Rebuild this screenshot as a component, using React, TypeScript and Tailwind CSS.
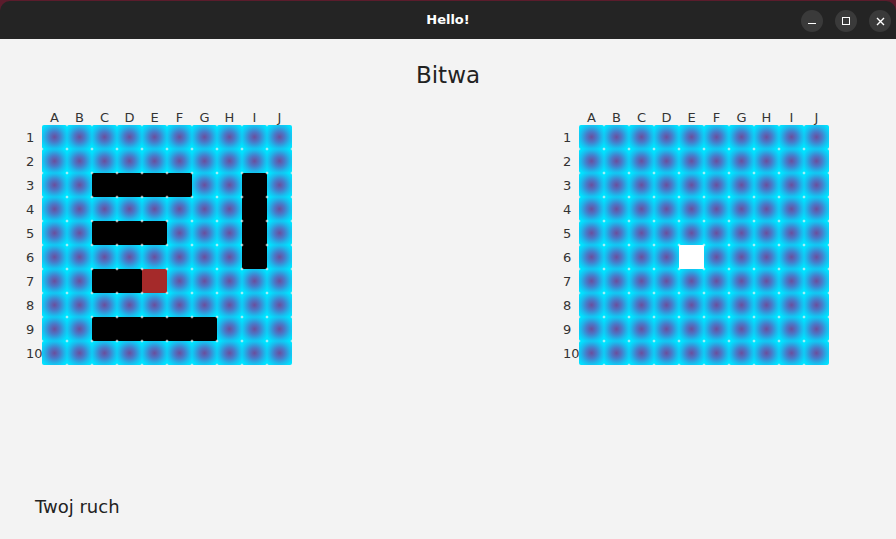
import React from "react";

const COLS = ["A", "B", "C", "D", "E", "F", "G", "H", "I", "J"];
const ROWS = [1, 2, 3, 4, 5, 6, 7, 8, 9, 10];

type Cell = "water" | "ship" | "hit" | "miss";

// ships on the player's board
const SHIPS = [
  "C3", "D3", "E3", "F3",
  "I3", "I4", "I5", "I6",
  "C5", "D5", "E5",
  "C7", "D7",
  "C9", "D9", "E9", "F9", "G9",
];

const leftBoard = (col: string, row: number): Cell => {
  const key = `${col}${row}`;
  if (key === "E7") return "hit";
  return SHIPS.includes(key) ? "ship" : "water";
};

const rightBoard = (col: string, row: number): Cell =>
  `${col}${row}` === "E6" ? "miss" : "water";

const cellClass: Record<Cell, string> = {
  water:
    "bg-[radial-gradient(circle,#6b4e9c_0%,#4a79c8_30%,#1cb8ec_60%,#00e1ff_85%)]",
  ship: "bg-black",
  hit: "bg-[#a52a2a]",
  miss: "bg-white",
};

const Board = ({ getCell }: { getCell: (c: string, r: number) => Cell }) => (
  <div className="flex flex-col text-[13px] text-[#333]">
    <div className="flex h-[16px] items-center pl-[16px]">
      {COLS.map((c) => (
        <div key={c} className="w-[25px] text-center leading-none">
          {c}
        </div>
      ))}
    </div>
    {ROWS.map((r) => (
      <div key={r} className="flex h-[24px]">
        <div className="w-[16px] flex items-center leading-none">{r}</div>
        {COLS.map((c) => (
          <div
            key={c}
            className={`w-[25px] h-[24px] rounded-[2px] ${cellClass[getCell(c, r)]}`}
          />
        ))}
      </div>
    ))}
  </div>
);

export default function App() {
  return (
    <div
      className="w-[896px] h-[539px] overflow-hidden bg-[#5b1c2c] flex flex-col"
      style={{ fontFamily: '"DejaVu Sans", sans-serif' }}
    >
      {/* Title bar */}
      <div className="mt-[1px] h-[38px] shrink-0 rounded-t-[10px] bg-[#242424] flex items-center relative">
        <div className="flex-1 text-center text-white font-bold text-[13px]">
          Hello!
        </div>
        <div className="absolute right-[5px] top-[9px] flex gap-[12px]">
          <div className="w-[22px] h-[22px] rounded-full bg-[#3a3a3a] flex items-center justify-center">
            <div className="w-[8px] h-[1.5px] bg-white mt-[5px]" />
          </div>
          <div className="w-[22px] h-[22px] rounded-full bg-[#3a3a3a] flex items-center justify-center">
            <div className="w-[8px] h-[8px] border border-white" />
          </div>
          <div className="w-[22px] h-[22px] rounded-full bg-[#3a3a3a] flex items-center justify-center">
            <svg width="9" height="9" viewBox="0 0 9 9">
              <path d="M1 1L8 8M8 1L1 8" stroke="white" strokeWidth="1.4" />
            </svg>
          </div>
        </div>
      </div>

      {/* Content */}
      <div className="flex-1 bg-[#f3f3f3] flex flex-col">
        <h1 className="text-center text-[23px] text-[#222] mt-[21px] leading-[30px]">
          Bitwa
        </h1>
        <div className="flex mt-[19px] pl-[26px] gap-[271px]">
          <Board getCell={leftBoard} />
          <Board getCell={rightBoard} />
        </div>
        <div className="mt-[128px] pl-[35px] text-[18px] text-[#222]">
          Twoj ruch
        </div>
      </div>
    </div>
  );
}
